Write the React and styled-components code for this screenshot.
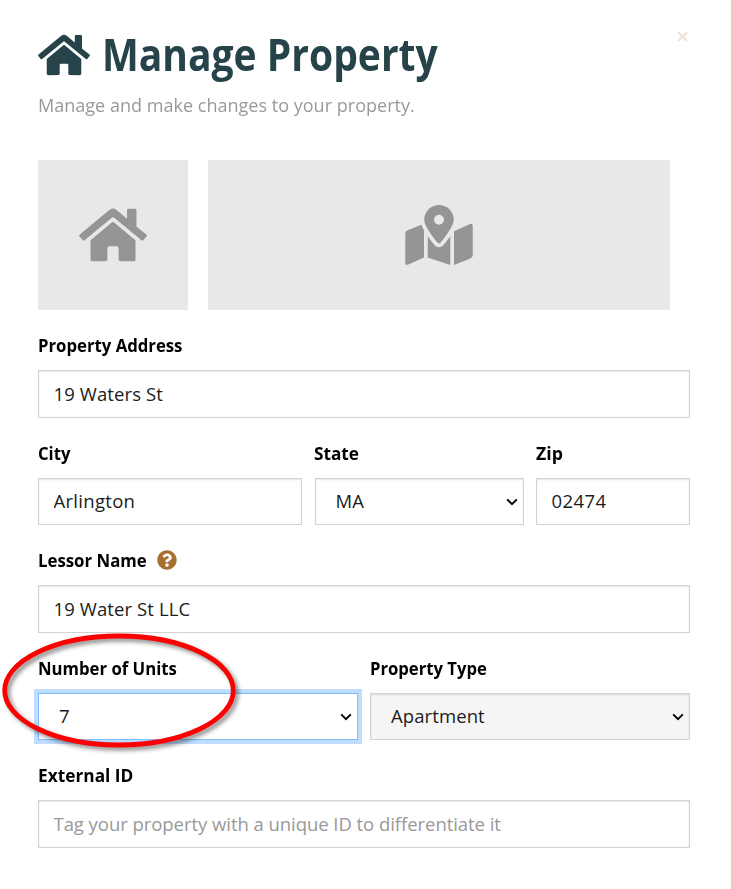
import React from 'react';
import styled, { createGlobalStyle, css } from 'styled-components';
import { FaHome, FaMapMarkedAlt, FaQuestionCircle } from 'react-icons/fa';

const GlobalStyle = createGlobalStyle`
  * { box-sizing: border-box; }
  body {
    margin: 0;
    background: #fff;
    color: #000;
    font-family: "Open Sans", "Noto Sans", sans-serif;
  }
`;

const Dialog = styled.main`
  position: relative;
  width: 731px;
  height: 889px;
  padding: 28px 41px 0 38px;
  overflow: hidden;
`;

const CloseButton = styled.button`
  position: absolute;
  top: 31px;
  left: 677px;
  width: 11px;
  height: 11px;
  padding: 0;
  border: 0;
  background: none;
  color: #efe3d5;
  line-height: 0;
`;

const Title = styled.h1`
  display: flex;
  align-items: center;
  gap: 12px;
  height: 52px;
  margin: 0;
  color: #26434a;
  font-size: 45px;
  font-weight: 660;
  line-height: 52px;
  white-space: nowrap;

  svg {
    flex: none;
    width: 52px;
    height: 46px;
    margin: 1px 0 0 -0.5px;
  }
`;

const Condensed = styled.span`
  display: inline-block;
  transform: scaleX(${({ $scale }) => $scale});
  transform-origin: left center;
  white-space: nowrap;
`;

const Subtitle = styled.p`
  height: 26px;
  margin: 12px 0 42px;
  color: #999;
  font-size: 18.5px;
  line-height: 26px;
`;

const Tiles = styled.div`
  display: grid;
  grid-template-columns: 150px 462px;
  gap: 20px;
  height: 150px;
  margin-bottom: 20px;
`;

const Tile = styled.div`
  display: flex;
  align-items: center;
  justify-content: center;
  background: #e8e8e8;
  color: #949596;

  svg {
    width: 68px;
    height: 60px;
  }
`;

const Form = styled.form`
  display: flex;
  flex-direction: column;
`;

const Row = styled.div`
  display: grid;
  grid-template-columns: ${({ $columns }) => $columns || '1fr'};
  justify-content: space-between;
  height: ${({ $height }) => $height || 108}px;
`;

const Field = styled.div`
  display: flex;
  flex-direction: column;
  min-width: 0;
`;

const Label = styled.label`
  display: flex;
  align-items: center;
  height: 30px;
  margin: 0 0 10px -0.5px;
  font-size: 18.5px;
  font-weight: 660;
  line-height: 30px;
  white-space: nowrap;
`;

const HelpIcon = styled(FaQuestionCircle)`
  width: 20px;
  height: 20px;
  margin-left: -0.5px;
  color: #a96f2f;
`;

const control = css`
  display: block;
  width: 100%;
  height: ${({ $height }) => $height || 48}px;
  margin: 0;
  padding: 0 15px 2px 14.5px;
  border: 1px solid #d2d2d2;
  border-radius: 0;
  outline: 0;
  background: #fff;
  box-shadow: inset 0 1px 2px rgba(0, 0, 0, 0.1);
  color: #1c1c1c;
  font-family: inherit;
  font-size: 18.5px;
  font-weight: 380;
  letter-spacing: ${({ $tracking }) => $tracking || 0}px;
`;

const Input = styled.input`
  ${control}

  &::placeholder {
    color: #999;
    font-weight: 400;
    opacity: 1;
  }
`;

const SelectBox = styled.div`
  display: grid;
  align-items: center;

  > * {
    grid-area: 1 / 1;
  }

  svg {
    justify-self: end;
    width: 12px;
    height: 8px;
    margin-right: 6px;
    pointer-events: none;
  }
`;

const NativeSelect = styled.select`
  ${control}
  appearance: none;
  padding: 0 24px 2px 20px;
  background: ${({ $muted }) => ($muted ? '#f5f5f5' : '#fff')};

  ${({ $focused }) =>
    $focused &&
    css`
      border-color: #80bdff;
      box-shadow: 0 0 0 4px #bfdeff;
    `}
`;

const Highlight = styled.svg`
  position: absolute;
  top: 620px;
  left: 0;
  width: 250px;
  height: 140px;
  overflow: visible;
  pointer-events: none;
  filter: drop-shadow(3px 3px 2px rgba(0, 0, 0, 0.45));
`;

function Select({ value, ...rest }) {
  return (
    <SelectBox>
      <NativeSelect defaultValue={value} $height={47} {...rest}>
        <option>{value}</option>
      </NativeSelect>
      <svg viewBox="0 0 12 8" fill="none" stroke="#000" strokeWidth="2">
        <path d="M1.2 1.4L6 6.1L10.8 1.4" />
      </svg>
    </SelectBox>
  );
}

export default function App() {
  return (
    <Dialog>
      <GlobalStyle />
      <CloseButton aria-label="Close">
        <svg width="11" height="11" viewBox="0 0 11 11" stroke="currentColor" strokeWidth="2.4">
          <path d="M1 1l9 9M10 1l-9 9" />
        </svg>
      </CloseButton>

      <Title>
        <FaHome />
        <Condensed $scale={0.867}>Manage Property</Condensed>
      </Title>
      <Subtitle>
        <Condensed $scale={0.975}>Manage and make changes to your property.</Condensed>
      </Subtitle>

      <Tiles>
        <Tile><FaHome /></Tile>
        <Tile><FaMapMarkedAlt /></Tile>
      </Tiles>

      <Form>
        <Row>
          <Field>
            <Label><Condensed $scale={0.904}>Property Address</Condensed></Label>
            <Input defaultValue="19 Waters St" $tracking={0.1} />
          </Field>
        </Row>
        <Row $columns="264px 209px 154px" $height={107}>
          <Field>
            <Label><Condensed $scale={0.9}>City</Condensed></Label>
            <Input defaultValue="Arlington" $height={47} $tracking={0.3} />
          </Field>
          <Field>
            <Label><Condensed $scale={0.93}>State</Condensed></Label>
            <Select value="MA" />
          </Field>
          <Field>
            <Label><Condensed $scale={0.96}>Zip</Condensed></Label>
            <Input defaultValue="02474" $height={47} $tracking={0.45} />
          </Field>
        </Row>
        <Row>
          <Field>
            <Label>
              <Condensed $scale={0.908}>Lessor Name</Condensed>
              <HelpIcon />
            </Label>
            <Input defaultValue="19 Water St LLC" $tracking={0.1} />
          </Field>
        </Row>
        <Row $columns="320px 320px" $height={107}>
          <Field>
            <Label><Condensed $scale={0.904}>Number of Units</Condensed></Label>
            <Select value="7" $focused />
          </Field>
          <Field>
            <Label><Condensed $scale={0.9}>Property Type</Condensed></Label>
            <Select value="Apartment" $muted $tracking={0.1} />
          </Field>
        </Row>
        <Row>
          <Field>
            <Label><Condensed $scale={0.935}>External ID</Condensed></Label>
            <Input placeholder="Tag your property with a unique ID to differentiate it" $tracking={-0.05} />
          </Field>
        </Row>
      </Form>

      <Highlight viewBox="0 0 250 140" fill="none" aria-hidden="true">
        <ellipse cx="119" cy="70.5" rx="114.3" ry="54.5" stroke="#fa0202" strokeWidth="4.8" />
      </Highlight>
    </Dialog>
  );
}
